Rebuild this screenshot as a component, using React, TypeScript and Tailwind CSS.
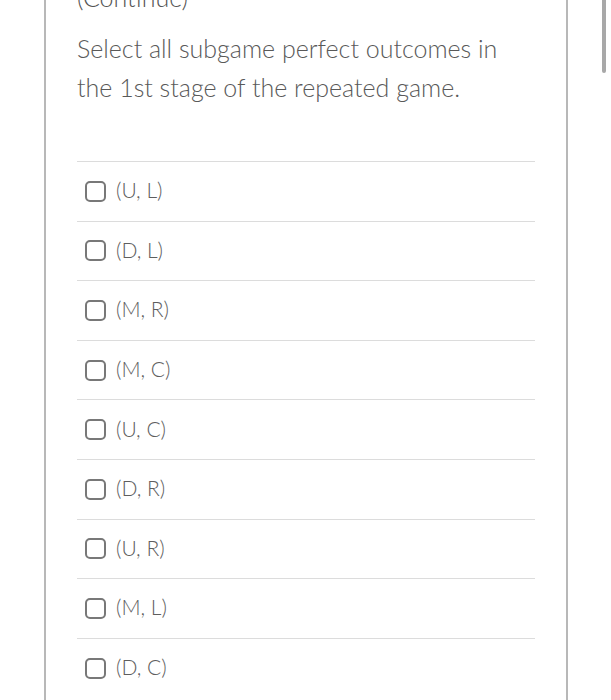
import React from "react";

const options = ["(U, L)", "(D, L)", "(M, R)", "(M, C)", "(U, C)", "(D, R)", "(U, R)", "(M, L)", "(D, C)"];

export default function App() {
  return (
    <div className="relative h-[700px] w-[611px] overflow-hidden bg-white font-['Lato','Noto_Sans',sans-serif] font-light text-[#555]">
      {/* scrollbar thumb */}
      <div className="absolute right-[5px] top-0 h-[73px] w-[4px] rounded-b-full bg-[#a8a8a8]" />

      <div className="ml-[44px] min-h-[760px] w-[524px] border-x-2 border-[#b8b8b8] px-[31px]">
        <div className="-mt-[20px] h-[34px] text-[25px] leading-[34px]">(Continue)</div>

        <p className="mt-[15px] text-[25px] leading-[39px] text-[#595959]">
          Select all subgame perfect outcomes in the 1st stage of the repeated game.
        </p>

        <div className="mt-[54px]">
          {options.map((opt) => (
            <label
              key={opt}
              className="flex h-[59.6px] items-center gap-[10px] border-t border-[#dcdcdc] pl-[8px]"
            >
              <span className="h-[21px] w-[21px] shrink-0 rounded-[5px] border-2 border-[#787878] bg-white" />
              <span className="-mt-[3px] text-[21px] leading-none text-[#5e5e5e]">{opt}</span>
            </label>
          ))}
        </div>
      </div>
    </div>
  );
}
